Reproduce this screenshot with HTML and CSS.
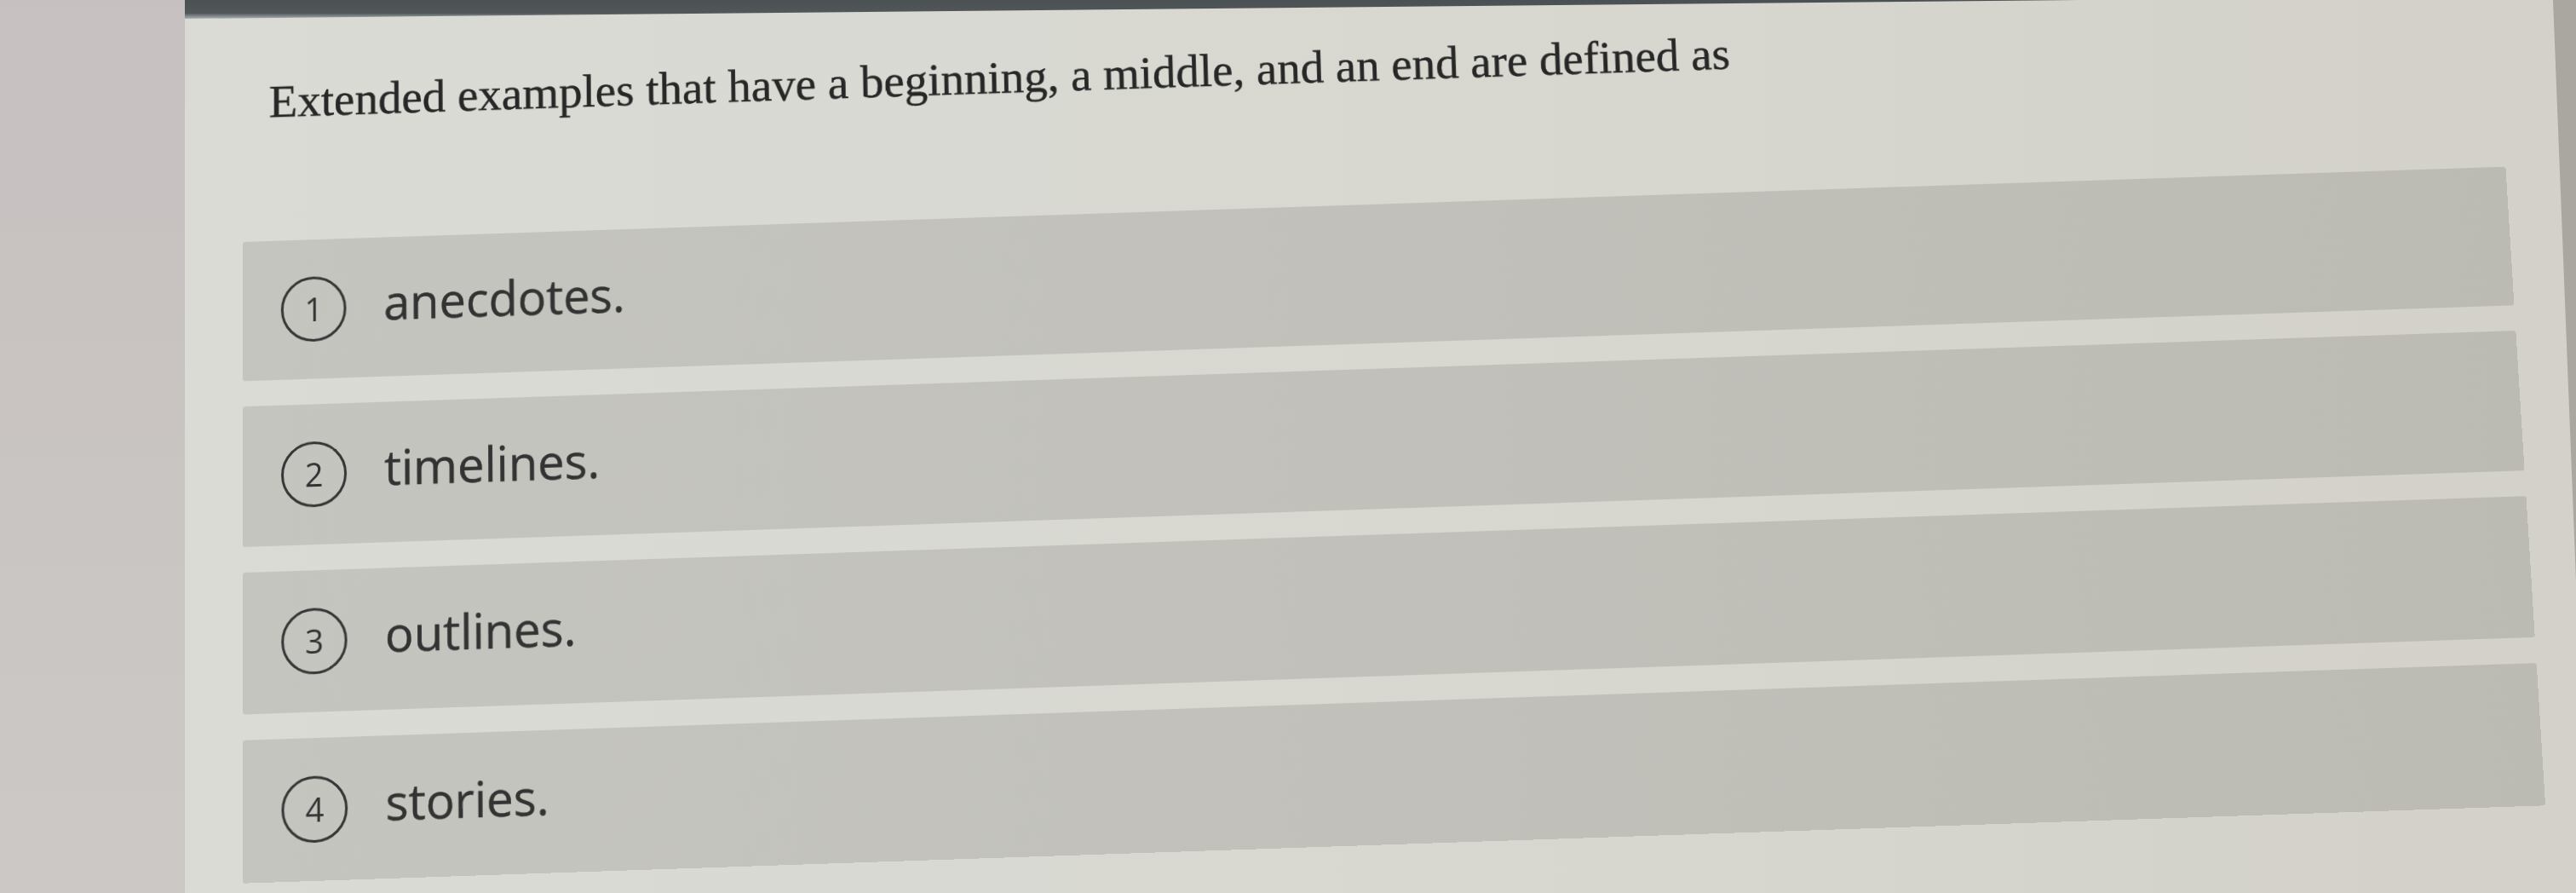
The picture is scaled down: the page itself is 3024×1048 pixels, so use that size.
FILE: index.html
```html
<!DOCTYPE html>
<html lang="en">
<head>
<meta charset="utf-8">
<title>Question</title>
<link rel="stylesheet" href="styles.css">
</head>
<body>
  <div class="wall"></div>
  <main class="screen">
    <div class="topbar"></div>
    <div class="content">
      <p class="question">Extended examples that have a beginning, a middle, and an end are defined as</p>
      <ol class="choices">
        <li class="choice"><span class="num">1</span><span class="label">anecdotes.</span></li>
        <li class="choice"><span class="num">2</span><span class="label">timelines.</span></li>
        <li class="choice"><span class="num">3</span><span class="label">outlines.</span></li>
        <li class="choice"><span class="num">4</span><span class="label">stories.</span></li>
      </ol>
    </div>
  </main>
  <div class="bezel"></div>
</body>
</html>
```

FILE: styles.css
```css
html, body {
  margin: 0;
  padding: 0;
}

body {
  width: 3024px;
  height: 1048px;
  overflow: hidden;
  display: flex;
  background: #d3d1c9;
}

/* wall to the left of the monitor */
.wall {
  flex: none;
  width: 217px;
  background: linear-gradient(to bottom, #c6c1c0, #ccc8c5);
}

.screen {
  flex: 1;
  display: flex;
  flex-direction: column;
  background: linear-gradient(to right, #dadbd5 0%, #d8d8d1 50%, #d3d1c9 100%);
  overflow: hidden;
}

/* dark window header fading off to the right */
.topbar {
  flex: none;
  height: 22px;
  background: linear-gradient(to bottom, #4a5053 0%, #525859 70%, #a9b1b2 100%);
  clip-path: polygon(0 0, 80% 0, 0 100%);
}

.content {
  margin-left: 68px;
  width: 2677px;
  padding-top: 66px;
  transform-origin: 0 50%;
  transform: perspective(3000px) rotateX(4deg) skewY(-1.92deg);
}

.question {
  margin: 0 0 138px 0;
  padding-left: 31px;
  font-family: "Liberation Serif", "Times New Roman", serif;
  font-size: 55.5px;
  line-height: 1;
  color: #272727;
  white-space: nowrap;
  -webkit-text-stroke: 0.4px #272727;
}

.choices {
  list-style: none;
  margin: 0;
  padding: 0;
  display: flex;
  flex-direction: column;
  gap: 30px;
}

.choice {
  height: 165px;
  display: flex;
  align-items: center;
  gap: 44px;
  padding-left: 45px;
  border-radius: 3px;
  background: linear-gradient(to right, #c5c5bf 0%, #c1c0ba 50%, #bcbbb3 100%);
}

.num {
  flex: none;
  width: 71px;
  height: 71px;
  box-sizing: content-box;
  border: 3px solid #363636;
  border-radius: 50%;
  display: flex;
  align-items: center;
  justify-content: center;
  font-family: "Open Sans", "Noto Sans", sans-serif;
  font-size: 38px;
  color: #333333;
}

.label {
  margin-bottom: 12px;
  font-family: "Open Sans", "Noto Sans", sans-serif;
  font-size: 56px;
  color: #333333;
  -webkit-text-stroke: 0.4px #333333;
}

/* edge of the monitor on the right */
.bezel {
  flex: none;
  width: 27px;
  background: #a9a79f;
  clip-path: polygon(0 0, 100% 0, 100% 65%);
}
```
